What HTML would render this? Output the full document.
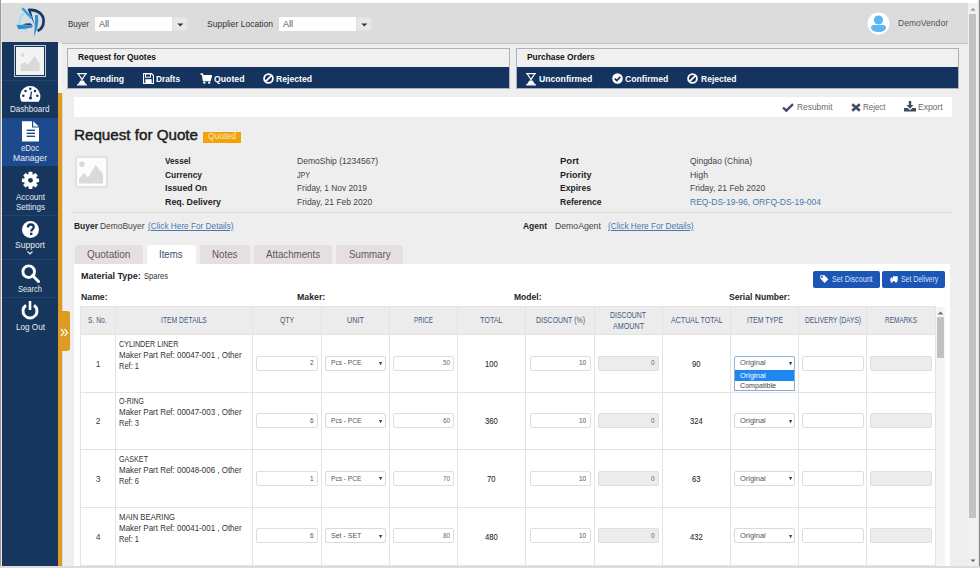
<!DOCTYPE html>
<html><head><meta charset="utf-8"><style>
html,body{margin:0;padding:0;}
body{width:980px;height:568px;overflow:hidden;position:relative;background:#eeeeee;font-family:"Liberation Sans",sans-serif;}
.t{position:absolute;white-space:nowrap;line-height:1.2;transform-origin:0 0;}
.b{position:absolute;box-sizing:border-box;}
</style></head><body>
<div class="b" style="left:0px;top:0px;width:980px;height:3px;background:#ffffff;"></div>
<div class="b" style="left:0px;top:0px;width:1px;height:568px;background:#9a9a9a;"></div>
<div class="b" style="left:1px;top:3px;width:1px;height:565px;background:#e8e8e8;"></div>
<div class="b" style="left:2px;top:3px;width:966px;height:40px;background:#dcdcdc;"></div>
<div class="b" style="left:2px;top:43px;width:966px;height:1px;background:#c4c2c2;"></div>
<div class="b" style="left:968px;top:3px;width:10px;height:563px;background:#f0f0f0;"></div>
<div class="b" style="left:969px;top:14px;width:7px;height:504px;background:#c2c2c2;"></div>
<svg class="b" style="left:969px;top:6px" width="8" height="6" viewBox="0 0 8 6"><path d="M1.5 4.5 L4 2 L6.5 4.5 Z" fill="#8a8a8a"/></svg>
<svg class="b" style="left:969px;top:558px" width="8" height="6" viewBox="0 0 8 6"><path d="M1.5 1.5 L4 4 L6.5 1.5 Z" fill="#606060"/></svg>
<div class="b" style="left:978px;top:0px;width:1px;height:568px;background:#e0e0e0;"></div>
<div class="b" style="left:979px;top:0px;width:1px;height:568px;background:#8a8a8a;"></div>
<div class="b" style="left:0px;top:566px;width:980px;height:2px;background:#d9dde2;"></div>
<svg class="b" style="left:14px;top:6px" width="34" height="34" viewBox="0 0 34 34">
<path d="M9.9 7.4 C6.5 10 5.4 14 5.9 17 C6.4 20.3 9 23 12.9 24.2" stroke="#a9ddf4" stroke-width="2.5" fill="none"/>
<path d="M14.5 3.9 C23.5 3 29.6 8.5 29.6 14.8 C29.6 20 26.8 23.6 23.6 25" stroke="#143a6b" stroke-width="2.7" fill="none"/>
<path d="M13.6 3 L16.4 3.6 L20.8 19.5 Z" fill="#143a6b"/>
<path d="M9 2.9 L17.4 11.9" stroke="#33a2df" stroke-width="2.5" stroke-linecap="round"/>
<path d="M23.7 8.5 C25.1 15 23.7 23 19.8 30.8 C20.8 23 21.3 15 21 9.6 Z" fill="#2a90d4"/>
<path d="M2.4 18.8 L18.6 19.6 L18.3 21.5 C13 22.6 8 23.1 4.4 23.3 Z" fill="#2a8fd0"/>
<path d="M8.4 18.6 C11 17.6 14 17.1 16.9 17.5 L18.6 19.6 Z" fill="#1a4373"/>
</svg>
<div class="t" style="left:67.50px;top:18.88px;font-size:9px;color:#333;transform:scaleX(0.8932);">Buyer</div>
<div class="b" style="left:95px;top:17px;width:93px;height:14px;background:#ffffff;"></div>
<div class="b" style="left:172px;top:17px;width:16px;height:14px;background:#e8e8e8;border:1px solid #e0e0e0;"></div>
<div class="t" style="left:99.00px;top:19.28px;font-size:9px;color:#555;">All</div>
<svg class="b" style="left:177px;top:23px" width="7" height="4" viewBox="0 0 7 4"><path d="M0.3 0.4 H6.3 L3.3 3.4 Z" fill="#333"/></svg>
<div class="t" style="left:207.00px;top:18.88px;font-size:9px;color:#333;transform:scaleX(0.9490);">Supplier Location</div>
<div class="b" style="left:279px;top:17px;width:93px;height:14px;background:#ffffff;"></div>
<div class="b" style="left:356px;top:17px;width:16px;height:14px;background:#e8e8e8;border:1px solid #e0e0e0;"></div>
<div class="t" style="left:283.00px;top:19.28px;font-size:9px;color:#555;">All</div>
<svg class="b" style="left:361px;top:23px" width="7" height="4" viewBox="0 0 7 4"><path d="M0.3 0.4 H6.3 L3.3 3.4 Z" fill="#333"/></svg>
<svg class="b" style="left:867px;top:12px" width="23" height="23" viewBox="0 0 23 23"><circle cx="11.5" cy="11.5" r="11" fill="#ffffff"/><circle cx="11.5" cy="8" r="4.6" fill="#5bb6f2"/><path d="M4 15.5 C4 13.5 6 13 8 13 L15 13 C17 13 19 13.5 19 15.5 C19 18 16 20 11.5 20 C7 20 4 18 4 15.5 Z" fill="#5bb6f2"/></svg>
<div class="t" style="left:898.00px;top:17.01px;font-size:9.5px;color:#555;transform:scaleX(0.9018);">DemoVendor</div>
<div class="b" style="left:2px;top:42px;width:56px;height:524px;background:#17365e;"></div>
<div class="b" style="left:58px;top:43px;width:4px;height:523px;background:#f2f2f2;"></div>
<div class="b" style="left:58px;top:93px;width:4px;height:473px;background:#dd9b22;"></div>
<div class="b" style="left:62px;top:93px;width:1px;height:473px;background:#dadada;"></div>
<div class="b" style="left:14px;top:45px;width:32px;height:32px;border:1px solid #c5cedb;"></div>
<div class="b" style="left:16px;top:47px;width:28px;height:28px;background:#f3f3f3;"></div>
<svg class="b" style="left:18px;top:50px" width="24" height="24" viewBox="0 0 24 24"><ellipse cx="4.7" cy="5" rx="1.6" ry="2" fill="#d9d9d9"/><path d="M2.6 21 L2.6 15 L6.4 12 L10 15 L16.4 6 L21.6 13 L21.6 21 Z" fill="#d9d9d9"/></svg>
<div class="b" style="left:2px;top:80px;width:56px;height:1px;background:#244271;"></div>
<svg class="b" style="left:20px;top:85px" width="22" height="18" viewBox="0 0 22 18"><path d="M1.6 16.8 A10.2 10.2 0 1 1 18.8 16.8 Z" fill="#ffffff"/><circle cx="5.5" cy="6" r="1.25" fill="#183562"/><circle cx="10.3" cy="3.8" r="1.25" fill="#183562"/><circle cx="15" cy="6" r="1.25" fill="#183562"/><circle cx="3.3" cy="10.8" r="1.25" fill="#183562"/><circle cx="17.3" cy="10.8" r="1.25" fill="#183562"/><path d="M11.5 6.5 L10.5 12.5" stroke="#183562" stroke-width="1.3"/><circle cx="10.5" cy="13" r="1.6" fill="#183562"/></svg>
<div class="t" style="left:10.25px;top:103.01px;font-size:9.5px;color:#e6ebf2;transform:scaleX(0.8500);">Dashboard</div>
<div class="b" style="left:2px;top:118px;width:56px;height:48px;background:#1d4a8c;"></div>
<svg class="b" style="left:22px;top:121px" width="17" height="21" viewBox="0 0 17 21"><path d="M0 0.3 H10 V6.6 H17 V20.5 H0 Z" fill="#ffffff"/><path d="M11.2 0.3 L16.8 5.6 H11.2 Z" fill="#ffffff"/><rect x="4.7" y="8.6" width="8.3" height="1.4" fill="#1d4a8c"/><rect x="4.7" y="11.6" width="8.3" height="1.4" fill="#1d4a8c"/><rect x="4.7" y="14.6" width="8.3" height="1.4" fill="#1d4a8c"/></svg>
<div class="t" style="left:21.00px;top:141.51px;font-size:9.5px;color:#e6ebf2;transform:scaleX(0.8117);">eDoc</div>
<div class="t" style="left:13.00px;top:152.01px;font-size:9.5px;color:#e6ebf2;transform:scaleX(0.9069);">Manager</div>
<svg class="b" style="left:21px;top:171px" width="19" height="19" viewBox="0 0 19 19"><g transform="translate(9.5,9.3)" fill="#ffffff"><circle r="6.6"/><rect x="-1.9" y="-8.6" width="3.8" height="4.5" rx="0.6" transform="rotate(0)"/><rect x="-1.9" y="-8.6" width="3.8" height="4.5" rx="0.6" transform="rotate(45)"/><rect x="-1.9" y="-8.6" width="3.8" height="4.5" rx="0.6" transform="rotate(90)"/><rect x="-1.9" y="-8.6" width="3.8" height="4.5" rx="0.6" transform="rotate(135)"/><rect x="-1.9" y="-8.6" width="3.8" height="4.5" rx="0.6" transform="rotate(180)"/><rect x="-1.9" y="-8.6" width="3.8" height="4.5" rx="0.6" transform="rotate(225)"/><rect x="-1.9" y="-8.6" width="3.8" height="4.5" rx="0.6" transform="rotate(270)"/><rect x="-1.9" y="-8.6" width="3.8" height="4.5" rx="0.6" transform="rotate(315)"/><circle r="2.4" fill="#17365e"/></g></svg>
<div class="t" style="left:15.50px;top:190.51px;font-size:9.5px;color:#e6ebf2;transform:scaleX(0.8449);">Account</div>
<div class="t" style="left:15.50px;top:201.01px;font-size:9.5px;color:#e6ebf2;transform:scaleX(0.8449);">Settings</div>
<div class="b" style="left:2px;top:215px;width:56px;height:1px;background:#244271;"></div>
<svg class="b" style="left:22.4px;top:220.7px" width="17" height="17" viewBox="0 0 17 17"><circle cx="8.5" cy="8.5" r="8.5" fill="#ffffff"/><path d="M5.9 6.6 C5.9 4.6 7.1 3.5 8.7 3.5 C10.5 3.5 11.7 4.6 11.7 6.1 C11.7 8.3 9.2 8.4 9.2 10.5" stroke="#17365e" stroke-width="2.3" fill="none"/><rect x="8" y="11.7" width="2.4" height="2.4" fill="#17365e"/></svg>
<div class="t" style="left:15.00px;top:239.01px;font-size:9.5px;color:#e6ebf2;transform:scaleX(0.9017);">Support</div>
<svg class="b" style="left:27px;top:251px" width="6" height="4" viewBox="0 0 6 4"><path d="M0.5 0.5 L3 3 L5.5 0.5" stroke="#e6ebf2" stroke-width="1.2" fill="none"/></svg>
<div class="b" style="left:2px;top:259px;width:56px;height:1px;background:#244271;"></div>
<svg class="b" style="left:21px;top:264px" width="19" height="19" viewBox="0 0 19 19"><circle cx="7.7" cy="7.7" r="5.8" stroke="#ffffff" stroke-width="2.9" fill="none"/><path d="M11.5 11.5 L17.5 17.5" stroke="#ffffff" stroke-width="3" stroke-linecap="round"/></svg>
<div class="t" style="left:18.00px;top:283.01px;font-size:9.5px;color:#e6ebf2;transform:scaleX(0.7974);">Search</div>
<div class="b" style="left:2px;top:297px;width:56px;height:1px;background:#244271;"></div>
<svg class="b" style="left:21px;top:300px" width="18" height="20" viewBox="0 0 18 20"><path d="M5 5.2 A7 7 0 1 0 13 5.2" stroke="#ffffff" stroke-width="2.9" fill="none"/><rect x="7.7" y="1" width="2.6" height="9" fill="#ffffff"/></svg>
<div class="t" style="left:15.50px;top:321.01px;font-size:9.5px;color:#e6ebf2;transform:scaleX(0.8580);">Log Out</div>
<div class="b" style="left:58px;top:311px;width:12px;height:40px;background:#dd9b22;border-radius:0 3px 3px 0;"></div>
<svg class="b" style="left:60px;top:328px" width="9" height="9" viewBox="0 0 9 9"><path d="M1 1 L4 4.5 L1 8 M4.5 1 L7.5 4.5 L4.5 8" stroke="#fff4dc" stroke-width="1.3" fill="none"/></svg>
<div class="b" style="left:67px;top:48px;width:443px;height:41px;border:1px solid #adb2ba;background:#f0f0f0;"></div>
<div class="b" style="left:68px;top:67px;width:441px;height:21px;background:#14335e;"></div>
<div class="t" style="left:78.00px;top:52.28px;font-size:9px;color:#111;font-weight:bold;transform:scaleX(0.9341);">Request for Quotes</div>
<div class="b" style="left:516px;top:48px;width:443px;height:41px;border:1px solid #adb2ba;background:#f0f0f0;"></div>
<div class="b" style="left:517px;top:67px;width:441px;height:21px;background:#14335e;"></div>
<div class="t" style="left:527.00px;top:52.28px;font-size:9px;color:#111;font-weight:bold;transform:scaleX(0.9320);">Purchase Orders</div>
<svg class="b" style="left:77px;top:72.5px" width="11" height="13" viewBox="0 0 11 13"><path d="M0 0 H10 V1.3 H0 Z M0 11.2 H10 V12.5 H0 Z" fill="#fff"/><path d="M1.4 1 L5 6.6 L8.6 1" stroke="#fff" stroke-width="1.2" fill="none"/><path d="M0.8 11.6 L3.4 7.4 L6.6 7.4 L9.2 11.6 Z" fill="#fff"/></svg>
<div class="t" style="left:90.40px;top:73.78px;font-size:9px;color:#fff;font-weight:bold;transform:scaleX(0.9578);">Pending</div>
<svg class="b" style="left:143px;top:73px" width="11" height="11" viewBox="0 0 11 11"><path d="M0.5 0.5 H8.5 L10.5 2.5 V10.5 H0.5 Z" fill="none" stroke="#fff" stroke-width="1.2"/><rect x="2.5" y="1" width="5" height="3.2" fill="none" stroke="#fff" stroke-width="1"/><rect x="2.3" y="6.2" width="6.4" height="3.8" fill="#fff"/></svg>
<div class="t" style="left:156.20px;top:73.78px;font-size:9px;color:#fff;font-weight:bold;transform:scaleX(0.9229);">Drafts</div>
<svg class="b" style="left:199.5px;top:73px" width="12" height="11" viewBox="0 0 12 11"><path d="M0.5 1 H2.5 L3.5 7.5 H10 L11.3 2.8 H3" stroke="#fff" stroke-width="1.6" fill="#fff" stroke-linejoin="round"/><circle cx="4.3" cy="9.6" r="1.2" fill="#fff"/><circle cx="9.2" cy="9.6" r="1.2" fill="#fff"/></svg>
<div class="t" style="left:213.70px;top:73.78px;font-size:9px;color:#fff;font-weight:bold;transform:scaleX(0.9685);">Quoted</div>
<svg class="b" style="left:262.5px;top:73px" width="11" height="11" viewBox="0 0 11 11"><circle cx="5.5" cy="5.5" r="4.4" stroke="#fff" stroke-width="1.8" fill="none"/><path d="M2.6 8.4 L8.4 2.6" stroke="#fff" stroke-width="1.8"/></svg>
<div class="t" style="left:276.00px;top:73.78px;font-size:9px;color:#fff;font-weight:bold;transform:scaleX(0.9597);">Rejected</div>
<svg class="b" style="left:526px;top:72.5px" width="11" height="13" viewBox="0 0 11 13"><path d="M0 0 H10 V1.3 H0 Z M0 11.2 H10 V12.5 H0 Z" fill="#fff"/><path d="M1.4 1 L5 6.6 L8.6 1" stroke="#fff" stroke-width="1.2" fill="none"/><path d="M0.8 11.6 L3.4 7.4 L6.6 7.4 L9.2 11.6 Z" fill="#fff"/></svg>
<div class="t" style="left:539.40px;top:73.78px;font-size:9px;color:#fff;font-weight:bold;transform:scaleX(0.9604);">Unconfirmed</div>
<svg class="b" style="left:611.5px;top:73px" width="11" height="11" viewBox="0 0 11 11"><circle cx="5.5" cy="5.5" r="5.3" fill="#fff"/><path d="M2.8 5.6 L4.8 7.6 L8.3 3.8" stroke="#14335e" stroke-width="1.7" fill="none"/></svg>
<div class="t" style="left:625.00px;top:73.78px;font-size:9px;color:#fff;font-weight:bold;transform:scaleX(0.9623);">Confirmed</div>
<svg class="b" style="left:687px;top:73px" width="11" height="11" viewBox="0 0 11 11"><circle cx="5.5" cy="5.5" r="4.4" stroke="#fff" stroke-width="1.8" fill="none"/><path d="M2.6 8.4 L8.4 2.6" stroke="#fff" stroke-width="1.8"/></svg>
<div class="t" style="left:700.70px;top:73.78px;font-size:9px;color:#fff;font-weight:bold;transform:scaleX(0.9463);">Rejected</div>
<div class="b" style="left:74px;top:97px;width:878px;height:20px;background:#ffffff;"></div>
<svg class="b" style="left:782px;top:103px" width="12" height="9" viewBox="0 0 12 9"><path d="M1 4.5 L4.3 7.7 L11 1.2" stroke="#3f4d5e" stroke-width="2.4" fill="none"/></svg>
<div class="t" style="left:797.00px;top:102.28px;font-size:9px;color:#6b6b6b;transform:scaleX(0.9339);">Resubmit</div>
<svg class="b" style="left:851px;top:103px" width="10" height="9" viewBox="0 0 10 9"><path d="M1.2 1.2 L8.8 7.8 M8.8 1.2 L1.2 7.8" stroke="#3f4d5e" stroke-width="2.6"/></svg>
<div class="t" style="left:863.40px;top:102.28px;font-size:9px;color:#6b6b6b;transform:scaleX(0.8820);">Reject</div>
<svg class="b" style="left:904px;top:101px" width="12" height="11" viewBox="0 0 12 11"><path d="M4.8 0 H7.2 V4 H9.5 L6 7.8 L2.5 4 H4.8 Z" fill="#3f4d5e"/><path d="M0 7 H3.6 L6 9.2 L8.4 7 H12 V10.5 H0 Z" fill="#3f4d5e"/></svg>
<div class="t" style="left:918.00px;top:102.28px;font-size:9px;color:#6b6b6b;transform:scaleX(0.9419);">Export</div>
<div class="t" style="left:74.00px;top:126.10px;font-size:15px;color:#1c1c1c;transform:scaleX(1.0117);-webkit-text-stroke:0.45px #1c1c1c;">Request for Quote</div>
<div class="b" style="left:203px;top:131.5px;width:38px;height:11.099999999999994px;background:#f4a20a;"></div>
<div class="t" style="left:208.00px;top:131.48px;font-size:9px;color:#fbe9c6;transform:scaleX(0.9485);">Quoted</div>
<div class="b" style="left:74.5px;top:155.5px;width:33.0px;height:32.5px;background:#fcfcfc;border:2px solid #e0e0e0;border-radius:3px;"></div>
<svg class="b" style="left:78px;top:159px" width="27" height="27" viewBox="0 0 27 27"><circle cx="3.9" cy="5.3" r="2.8" fill="#dadada"/><path d="M1 24.5 L1 20 L6 14 L10 18.5 L17.7 6 L25 15 L25 24.5 Z" fill="#dadada"/></svg>
<div class="t" style="left:165.40px;top:156.18px;font-size:9px;color:#1e1e1e;font-weight:bold;transform:scaleX(0.9134);">Vessel</div>
<div class="t" style="left:297.00px;top:156.18px;font-size:9px;color:#444;transform:scaleX(0.9469);">DemoShip (1234567)</div>
<div class="t" style="left:165.40px;top:169.78px;font-size:9px;color:#1e1e1e;font-weight:bold;transform:scaleX(0.9364);">Currency</div>
<div class="t" style="left:297.00px;top:169.78px;font-size:9px;color:#444;transform:scaleX(0.7876);">JPY</div>
<div class="t" style="left:165.40px;top:183.38px;font-size:9px;color:#1e1e1e;font-weight:bold;transform:scaleX(0.9654);">Issued On</div>
<div class="t" style="left:297.00px;top:183.38px;font-size:9px;color:#444;transform:scaleX(0.9288);">Friday, 1 Nov 2019</div>
<div class="t" style="left:165.40px;top:196.98px;font-size:9px;color:#1e1e1e;font-weight:bold;transform:scaleX(0.9820);">Req. Delivery</div>
<div class="t" style="left:297.00px;top:196.98px;font-size:9px;color:#444;transform:scaleX(0.9415);">Friday, 21 Feb 2020</div>
<div class="t" style="left:559.60px;top:156.18px;font-size:9px;color:#1e1e1e;font-weight:bold;transform:scaleX(1.0556);">Port</div>
<div class="t" style="left:689.70px;top:156.18px;font-size:9px;color:#444;transform:scaleX(0.9389);">Qingdao (China)</div>
<div class="t" style="left:559.60px;top:169.78px;font-size:9px;color:#1e1e1e;font-weight:bold;transform:scaleX(0.9997);">Priority</div>
<div class="t" style="left:689.70px;top:169.78px;font-size:9px;color:#444;transform:scaleX(0.9725);">High</div>
<div class="t" style="left:559.60px;top:183.38px;font-size:9px;color:#1e1e1e;font-weight:bold;transform:scaleX(0.9533);">Expires</div>
<div class="t" style="left:689.70px;top:183.38px;font-size:9px;color:#444;transform:scaleX(0.9415);">Friday, 21 Feb 2020</div>
<div class="t" style="left:559.60px;top:196.98px;font-size:9px;color:#1e1e1e;font-weight:bold;transform:scaleX(0.9536);">Reference</div>
<div class="t" style="left:689.70px;top:196.98px;font-size:9px;color:#4a78b0;transform:scaleX(0.9456);">REQ-DS-19-96, ORFQ-DS-19-004</div>
<div class="b" style="left:72px;top:212px;width:880px;height:1px;background:#dcdcdc;"></div>
<div class="t" style="left:74.00px;top:220.78px;font-size:9px;color:#1e1e1e;font-weight:bold;transform:scaleX(0.9408);">Buyer</div>
<div class="t" style="left:100.30px;top:220.78px;font-size:9px;color:#444;transform:scaleX(0.9365);">DemoBuyer</div>
<div class="t" style="left:147.50px;top:220.78px;font-size:9px;color:#4a78b0;transform:scaleX(0.9144);text-decoration:underline;">(Click Here For Details)</div>
<div class="t" style="left:523.00px;top:220.78px;font-size:9px;color:#1e1e1e;font-weight:bold;transform:scaleX(0.9413);">Agent</div>
<div class="t" style="left:554.70px;top:220.78px;font-size:9px;color:#444;transform:scaleX(0.9637);">DemoAgent</div>
<div class="t" style="left:608.00px;top:220.78px;font-size:9px;color:#4a78b0;transform:scaleX(0.9144);text-decoration:underline;">(Click Here For Details)</div>
<div class="b" style="left:74.5px;top:245px;width:68.0px;height:19px;background:#e6dfdf;border-radius:3px 3px 0 0;"></div>
<div class="t" style="left:86.90px;top:247.66px;font-size:10.5px;color:#5a5a5a;transform:scaleX(0.9510);">Quotation</div>
<div class="b" style="left:146.5px;top:245px;width:49.0px;height:19px;background:#ffffff;border-radius:3px 3px 0 0;"></div>
<div class="t" style="left:158.80px;top:247.66px;font-size:10.5px;color:#3d4d6e;transform:scaleX(0.9194);">Items</div>
<div class="b" style="left:200px;top:245px;width:50px;height:19px;background:#e6dfdf;border-radius:3px 3px 0 0;"></div>
<div class="t" style="left:212.00px;top:247.66px;font-size:10.5px;color:#5a5a5a;transform:scaleX(0.9261);">Notes</div>
<div class="b" style="left:254px;top:245px;width:78px;height:19px;background:#e6dfdf;border-radius:3px 3px 0 0;"></div>
<div class="t" style="left:265.80px;top:247.66px;font-size:10.5px;color:#5a5a5a;transform:scaleX(0.9253);">Attachments</div>
<div class="b" style="left:335.5px;top:245px;width:67.0px;height:19px;background:#e6dfdf;border-radius:3px 3px 0 0;"></div>
<div class="t" style="left:348.50px;top:247.66px;font-size:10.5px;color:#5a5a5a;transform:scaleX(0.9261);">Summary</div>
<div class="b" style="left:74px;top:264px;width:876px;height:302px;background:#ffffff;"></div>
<div class="t" style="left:80.60px;top:270.88px;font-size:9px;color:#1e1e1e;font-weight:bold;transform:scaleX(0.9976);">Material Type:</div>
<div class="t" style="left:143.50px;top:270.88px;font-size:9px;color:#333;transform:scaleX(0.8417);">Spares</div>
<div class="b" style="left:813px;top:270.5px;width:67px;height:17.5px;background:#1b55b5;border-radius:2px;"></div>
<svg class="b" style="left:819.5px;top:275.3px" width="9" height="8" viewBox="0 0 9 8"><path d="M0.3 0.3 H4.4 L8.4 4.2 L4.6 7.9 L0.3 3.6 Z" fill="#fff"/><circle cx="2" cy="2" r="0.9" fill="#1b55b5"/></svg>
<div class="t" style="left:831.80px;top:274.25px;font-size:8.5px;color:#d8e3f5;transform:scaleX(0.8425);">Set Discount</div>
<div class="b" style="left:882px;top:270.5px;width:63px;height:17.5px;background:#1b55b5;border-radius:2px;"></div>
<svg class="b" style="left:889.5px;top:276px" width="8" height="7" viewBox="0 0 8 7"><path d="M3 0.3 H7.7 V5.2 H3 Z M0.3 2.6 L1.3 1.4 H2.8 V5.2 H0.3 Z" fill="#fff"/><circle cx="1.8" cy="5.6" r="1.1" fill="#fff"/><circle cx="6" cy="5.6" r="1.1" fill="#fff"/></svg>
<div class="t" style="left:900.70px;top:274.25px;font-size:8.5px;color:#d8e3f5;transform:scaleX(0.8119);">Set Delivery</div>
<div class="t" style="left:80.60px;top:291.68px;font-size:9px;color:#1e1e1e;font-weight:bold;transform:scaleX(0.9670);">Name:</div>
<div class="t" style="left:297.30px;top:291.68px;font-size:9px;color:#1e1e1e;font-weight:bold;transform:scaleX(0.9720);">Maker:</div>
<div class="t" style="left:513.80px;top:291.68px;font-size:9px;color:#1e1e1e;font-weight:bold;transform:scaleX(0.9485);">Model:</div>
<div class="t" style="left:729.40px;top:291.68px;font-size:9px;color:#1e1e1e;font-weight:bold;transform:scaleX(0.9529);">Serial Number:</div>
<div class="b" style="left:80px;top:306.5px;width:855px;height:28.0px;background:#ececec;"></div>
<div class="b" style="left:80px;top:306px;width:855px;height:1px;background:#e3e3e3;"></div>
<div class="b" style="left:80px;top:334px;width:855px;height:1px;background:#e3e3e3;"></div>
<div class="b" style="left:80px;top:392px;width:855px;height:1px;background:#e3e3e3;"></div>
<div class="b" style="left:80px;top:449px;width:855px;height:1px;background:#e3e3e3;"></div>
<div class="b" style="left:80px;top:507px;width:855px;height:1px;background:#e3e3e3;"></div>
<div class="b" style="left:80px;top:565px;width:855px;height:1px;background:#e3e3e3;"></div>
<div class="b" style="left:80px;top:306px;width:1px;height:260px;background:#e3e3e3;"></div>
<div class="b" style="left:115px;top:306px;width:1px;height:260px;background:#e3e3e3;"></div>
<div class="b" style="left:252px;top:306px;width:1px;height:260px;background:#e3e3e3;"></div>
<div class="b" style="left:321px;top:306px;width:1px;height:260px;background:#e3e3e3;"></div>
<div class="b" style="left:389px;top:306px;width:1px;height:260px;background:#e3e3e3;"></div>
<div class="b" style="left:457px;top:306px;width:1px;height:260px;background:#e3e3e3;"></div>
<div class="b" style="left:525px;top:306px;width:1px;height:260px;background:#e3e3e3;"></div>
<div class="b" style="left:594px;top:306px;width:1px;height:260px;background:#e3e3e3;"></div>
<div class="b" style="left:662px;top:306px;width:1px;height:260px;background:#e3e3e3;"></div>
<div class="b" style="left:730px;top:306px;width:1px;height:260px;background:#e3e3e3;"></div>
<div class="b" style="left:798px;top:306px;width:1px;height:260px;background:#e3e3e3;"></div>
<div class="b" style="left:866px;top:306px;width:1px;height:260px;background:#e3e3e3;"></div>
<div class="b" style="left:935px;top:306px;width:1px;height:260px;background:#e3e3e3;"></div>
<div class="t" style="left:88.45px;top:315.45px;font-size:8.5px;color:#3f5a80;transform:scaleX(0.7875);">S. No.</div>
<div class="t" style="left:161.05px;top:315.45px;font-size:8.5px;color:#3f5a80;transform:scaleX(0.7988);">ITEM DETAILS</div>
<div class="t" style="left:280.00px;top:315.45px;font-size:8.5px;color:#3f5a80;transform:scaleX(0.8012);">QTY</div>
<div class="t" style="left:347.00px;top:315.45px;font-size:8.5px;color:#3f5a80;transform:scaleX(0.8573);">UNIT</div>
<div class="t" style="left:414.00px;top:315.45px;font-size:8.5px;color:#3f5a80;transform:scaleX(0.7314);">PRICE</div>
<div class="t" style="left:480.35px;top:315.45px;font-size:8.5px;color:#3f5a80;transform:scaleX(0.8494);">TOTAL</div>
<div class="t" style="left:535.60px;top:315.45px;font-size:8.5px;color:#3f5a80;transform:scaleX(0.8192);">DISCOUNT (%)</div>
<div class="t" style="left:610.40px;top:309.75px;font-size:8.5px;color:#3f5a80;transform:scaleX(0.8110);">DISCOUNT</div>
<div class="t" style="left:612.90px;top:320.75px;font-size:8.5px;color:#3f5a80;transform:scaleX(0.8417);">AMOUNT</div>
<div class="t" style="left:670.80px;top:315.45px;font-size:8.5px;color:#3f5a80;transform:scaleX(0.8318);">ACTUAL TOTAL</div>
<div class="t" style="left:746.80px;top:315.45px;font-size:8.5px;color:#3f5a80;transform:scaleX(0.8052);">ITEM TYPE</div>
<div class="t" style="left:804.65px;top:315.45px;font-size:8.5px;color:#3f5a80;transform:scaleX(0.7748);">DELIVERY (DAYS)</div>
<div class="t" style="left:884.75px;top:315.45px;font-size:8.5px;color:#3f5a80;transform:scaleX(0.7612);">REMARKS</div>
<div class="b" style="left:935.5px;top:307px;width:9.0px;height:259px;background:#f5f5f5;"></div>
<div class="b" style="left:937px;top:317px;width:6.7000000000000455px;height:41px;background:#c1c1c1;"></div>
<svg class="b" style="left:937px;top:311px" width="7" height="4" viewBox="0 0 7 4"><path d="M0.5 3.5 L3.5 0.5 L6.5 3.5 Z" fill="#707070"/></svg>
<div class="t" style="left:95.64px;top:358.75px;font-size:8.5px;color:#444;">1</div>
<div class="t" style="left:119.40px;top:338.85px;font-size:8.5px;color:#333;transform:scaleX(0.8426);">CYLINDER LINER</div>
<div class="t" style="left:119.40px;top:349.85px;font-size:8.5px;color:#333;transform:scaleX(0.9369);">Maker Part Ref: 00047-001 , Other</div>
<div class="t" style="left:119.40px;top:360.95px;font-size:8.5px;color:#333;transform:scaleX(0.8820);">Ref: 1</div>
<div class="b" style="left:256.3px;top:355.5px;width:61.69999999999999px;height:15.0px;background:#fff;border:1px solid #dedede;border-radius:2px;"></div>
<div class="t" style="left:309.94px;top:358.43px;font-size:8px;color:#505050;transform:scaleX(0.8000);">2</div>
<div class="b" style="left:325.3px;top:355.5px;width:60.69999999999999px;height:15.0px;background:#fff;border:1px solid #d9d9d9;border-radius:2px;"></div>
<div class="t" style="left:331.30px;top:358.43px;font-size:8px;color:#555;transform:scaleX(0.8240);">Pcs - PCE</div>
<svg class="b" style="left:378px;top:361.0px" width="5" height="5" viewBox="0 0 5 5"><path d="M0.9 1 H4.3 L2.6 4.2 Z" fill="#444"/></svg>
<div class="b" style="left:393.4px;top:355.5px;width:61.10000000000002px;height:15.0px;background:#fff;border:1px solid #dedede;border-radius:2px;"></div>
<div class="t" style="left:442.88px;top:358.43px;font-size:8px;color:#6a6a6a;transform:scaleX(0.8000);">50</div>
<div class="t" style="left:485.32px;top:358.75px;font-size:8.5px;color:#222;transform:scaleX(0.9000);-webkit-text-stroke:0.05px #111;">100</div>
<div class="b" style="left:529.6px;top:355.5px;width:61.39999999999998px;height:15.0px;background:#fff;border:1px solid #dedede;border-radius:2px;"></div>
<div class="t" style="left:579.38px;top:358.43px;font-size:8px;color:#505050;transform:scaleX(0.8000);">10</div>
<div class="b" style="left:597.7px;top:355.5px;width:61.299999999999955px;height:15.0px;background:#ececec;border:1px solid #dedede;border-radius:2px;"></div>
<div class="t" style="left:650.94px;top:358.43px;font-size:8px;color:#666;transform:scaleX(0.8000);">0</div>
<div class="t" style="left:692.15px;top:358.75px;font-size:8.5px;color:#222;transform:scaleX(0.9000);-webkit-text-stroke:0.05px #111;">90</div>
<div class="b" style="left:734.2px;top:355.5px;width:61.299999999999955px;height:15.0px;background:#fff;border:1px solid #8fb4e0;border-radius:2px;"></div>
<div class="t" style="left:740.20px;top:358.43px;font-size:8px;color:#555;transform:scaleX(0.9323);">Original</div>
<svg class="b" style="left:787.5px;top:361.0px" width="5" height="5" viewBox="0 0 5 5"><path d="M0.9 1 H4.3 L2.6 4.2 Z" fill="#444"/></svg>
<div class="b" style="left:802px;top:355.5px;width:61.5px;height:15.0px;background:#fff;border:1px solid #dedede;border-radius:2px;"></div>
<div class="b" style="left:870px;top:355.5px;width:61.60000000000002px;height:15.0px;background:#ececec;border:1px solid #dedede;border-radius:2px;"></div>
<div class="t" style="left:95.64px;top:416.25px;font-size:8.5px;color:#444;">2</div>
<div class="t" style="left:119.40px;top:396.35px;font-size:8.5px;color:#333;transform:scaleX(0.8146);">O-RING</div>
<div class="t" style="left:119.40px;top:407.35px;font-size:8.5px;color:#333;transform:scaleX(0.9369);">Maker Part Ref: 00047-003 , Other</div>
<div class="t" style="left:119.40px;top:418.45px;font-size:8.5px;color:#333;transform:scaleX(0.8820);">Ref: 3</div>
<div class="b" style="left:256.3px;top:413.0px;width:61.69999999999999px;height:15.0px;background:#fff;border:1px solid #dedede;border-radius:2px;"></div>
<div class="t" style="left:309.94px;top:415.93px;font-size:8px;color:#505050;transform:scaleX(0.8000);">6</div>
<div class="b" style="left:325.3px;top:413.0px;width:60.69999999999999px;height:15.0px;background:#fff;border:1px solid #d9d9d9;border-radius:2px;"></div>
<div class="t" style="left:331.30px;top:415.93px;font-size:8px;color:#555;transform:scaleX(0.8240);">Pcs - PCE</div>
<svg class="b" style="left:378px;top:418.5px" width="5" height="5" viewBox="0 0 5 5"><path d="M0.9 1 H4.3 L2.6 4.2 Z" fill="#444"/></svg>
<div class="b" style="left:393.4px;top:413.0px;width:61.10000000000002px;height:15.0px;background:#fff;border:1px solid #dedede;border-radius:2px;"></div>
<div class="t" style="left:442.88px;top:415.93px;font-size:8px;color:#6a6a6a;transform:scaleX(0.8000);">60</div>
<div class="t" style="left:485.32px;top:416.25px;font-size:8.5px;color:#222;transform:scaleX(0.9000);-webkit-text-stroke:0.05px #111;">360</div>
<div class="b" style="left:529.6px;top:413.0px;width:61.39999999999998px;height:15.0px;background:#fff;border:1px solid #dedede;border-radius:2px;"></div>
<div class="t" style="left:579.38px;top:415.93px;font-size:8px;color:#505050;transform:scaleX(0.8000);">10</div>
<div class="b" style="left:597.7px;top:413.0px;width:61.299999999999955px;height:15.0px;background:#ececec;border:1px solid #dedede;border-radius:2px;"></div>
<div class="t" style="left:650.94px;top:415.93px;font-size:8px;color:#666;transform:scaleX(0.8000);">0</div>
<div class="t" style="left:690.02px;top:416.25px;font-size:8.5px;color:#222;transform:scaleX(0.9000);-webkit-text-stroke:0.05px #111;">324</div>
<div class="b" style="left:734.2px;top:413.0px;width:61.299999999999955px;height:15.0px;background:#fff;border:1px solid #d9d9d9;border-radius:2px;"></div>
<div class="t" style="left:740.20px;top:415.93px;font-size:8px;color:#555;transform:scaleX(0.9323);">Original</div>
<svg class="b" style="left:787.5px;top:418.5px" width="5" height="5" viewBox="0 0 5 5"><path d="M0.9 1 H4.3 L2.6 4.2 Z" fill="#444"/></svg>
<div class="b" style="left:802px;top:413.0px;width:61.5px;height:15.0px;background:#fff;border:1px solid #dedede;border-radius:2px;"></div>
<div class="b" style="left:870px;top:413.0px;width:61.60000000000002px;height:15.0px;background:#ececec;border:1px solid #dedede;border-radius:2px;"></div>
<div class="t" style="left:95.64px;top:473.95px;font-size:8.5px;color:#444;">3</div>
<div class="t" style="left:119.40px;top:454.05px;font-size:8.5px;color:#333;transform:scaleX(0.8410);">GASKET</div>
<div class="t" style="left:119.40px;top:465.05px;font-size:8.5px;color:#333;transform:scaleX(0.9369);">Maker Part Ref: 00048-006 , Other</div>
<div class="t" style="left:119.40px;top:476.15px;font-size:8.5px;color:#333;transform:scaleX(0.8820);">Ref: 6</div>
<div class="b" style="left:256.3px;top:470.7px;width:61.69999999999999px;height:15.0px;background:#fff;border:1px solid #dedede;border-radius:2px;"></div>
<div class="t" style="left:309.94px;top:473.63px;font-size:8px;color:#505050;transform:scaleX(0.8000);">1</div>
<div class="b" style="left:325.3px;top:470.7px;width:60.69999999999999px;height:15.0px;background:#fff;border:1px solid #d9d9d9;border-radius:2px;"></div>
<div class="t" style="left:331.30px;top:473.63px;font-size:8px;color:#555;transform:scaleX(0.8240);">Pcs - PCE</div>
<svg class="b" style="left:378px;top:476.2px" width="5" height="5" viewBox="0 0 5 5"><path d="M0.9 1 H4.3 L2.6 4.2 Z" fill="#444"/></svg>
<div class="b" style="left:393.4px;top:470.7px;width:61.10000000000002px;height:15.0px;background:#fff;border:1px solid #dedede;border-radius:2px;"></div>
<div class="t" style="left:442.88px;top:473.63px;font-size:8px;color:#6a6a6a;transform:scaleX(0.8000);">70</div>
<div class="t" style="left:487.45px;top:473.95px;font-size:8.5px;color:#222;transform:scaleX(0.9000);-webkit-text-stroke:0.05px #111;">70</div>
<div class="b" style="left:529.6px;top:470.7px;width:61.39999999999998px;height:15.0px;background:#fff;border:1px solid #dedede;border-radius:2px;"></div>
<div class="t" style="left:579.38px;top:473.63px;font-size:8px;color:#505050;transform:scaleX(0.8000);">10</div>
<div class="b" style="left:597.7px;top:470.7px;width:61.299999999999955px;height:15.0px;background:#ececec;border:1px solid #dedede;border-radius:2px;"></div>
<div class="t" style="left:650.94px;top:473.63px;font-size:8px;color:#666;transform:scaleX(0.8000);">0</div>
<div class="t" style="left:692.15px;top:473.95px;font-size:8.5px;color:#222;transform:scaleX(0.9000);-webkit-text-stroke:0.05px #111;">63</div>
<div class="b" style="left:734.2px;top:470.7px;width:61.299999999999955px;height:15.0px;background:#fff;border:1px solid #d9d9d9;border-radius:2px;"></div>
<div class="t" style="left:740.20px;top:473.63px;font-size:8px;color:#555;transform:scaleX(0.9323);">Original</div>
<svg class="b" style="left:787.5px;top:476.2px" width="5" height="5" viewBox="0 0 5 5"><path d="M0.9 1 H4.3 L2.6 4.2 Z" fill="#444"/></svg>
<div class="b" style="left:802px;top:470.7px;width:61.5px;height:15.0px;background:#fff;border:1px solid #dedede;border-radius:2px;"></div>
<div class="b" style="left:870px;top:470.7px;width:61.60000000000002px;height:15.0px;background:#ececec;border:1px solid #dedede;border-radius:2px;"></div>
<div class="t" style="left:95.64px;top:531.65px;font-size:8.5px;color:#444;">4</div>
<div class="t" style="left:119.40px;top:511.75px;font-size:8.5px;color:#333;transform:scaleX(0.9051);">MAIN BEARING</div>
<div class="t" style="left:119.40px;top:522.75px;font-size:8.5px;color:#333;transform:scaleX(0.9369);">Maker Part Ref: 00041-001 , Other</div>
<div class="t" style="left:119.40px;top:533.85px;font-size:8.5px;color:#333;transform:scaleX(0.8820);">Ref: 1</div>
<div class="b" style="left:256.3px;top:528.4px;width:61.69999999999999px;height:15.0px;background:#fff;border:1px solid #dedede;border-radius:2px;"></div>
<div class="t" style="left:309.94px;top:531.33px;font-size:8px;color:#505050;transform:scaleX(0.8000);">6</div>
<div class="b" style="left:325.3px;top:528.4px;width:60.69999999999999px;height:15.0px;background:#fff;border:1px solid #d9d9d9;border-radius:2px;"></div>
<div class="t" style="left:331.30px;top:531.33px;font-size:8px;color:#555;transform:scaleX(0.8767);">Set - SET</div>
<svg class="b" style="left:378px;top:533.9px" width="5" height="5" viewBox="0 0 5 5"><path d="M0.9 1 H4.3 L2.6 4.2 Z" fill="#444"/></svg>
<div class="b" style="left:393.4px;top:528.4px;width:61.10000000000002px;height:15.0px;background:#fff;border:1px solid #dedede;border-radius:2px;"></div>
<div class="t" style="left:442.88px;top:531.33px;font-size:8px;color:#6a6a6a;transform:scaleX(0.8000);">80</div>
<div class="t" style="left:485.32px;top:531.65px;font-size:8.5px;color:#222;transform:scaleX(0.9000);-webkit-text-stroke:0.05px #111;">480</div>
<div class="b" style="left:529.6px;top:528.4px;width:61.39999999999998px;height:15.0px;background:#fff;border:1px solid #dedede;border-radius:2px;"></div>
<div class="t" style="left:579.38px;top:531.33px;font-size:8px;color:#505050;transform:scaleX(0.8000);">10</div>
<div class="b" style="left:597.7px;top:528.4px;width:61.299999999999955px;height:15.0px;background:#ececec;border:1px solid #dedede;border-radius:2px;"></div>
<div class="t" style="left:650.94px;top:531.33px;font-size:8px;color:#666;transform:scaleX(0.8000);">0</div>
<div class="t" style="left:690.02px;top:531.65px;font-size:8.5px;color:#222;transform:scaleX(0.9000);-webkit-text-stroke:0.05px #111;">432</div>
<div class="b" style="left:734.2px;top:528.4px;width:61.299999999999955px;height:15.0px;background:#fff;border:1px solid #d9d9d9;border-radius:2px;"></div>
<div class="t" style="left:740.20px;top:531.33px;font-size:8px;color:#555;transform:scaleX(0.9323);">Original</div>
<svg class="b" style="left:787.5px;top:533.9px" width="5" height="5" viewBox="0 0 5 5"><path d="M0.9 1 H4.3 L2.6 4.2 Z" fill="#444"/></svg>
<div class="b" style="left:802px;top:528.4px;width:61.5px;height:15.0px;background:#fff;border:1px solid #dedede;border-radius:2px;"></div>
<div class="b" style="left:870px;top:528.4px;width:61.60000000000002px;height:15.0px;background:#ececec;border:1px solid #dedede;border-radius:2px;"></div>
<div class="b" style="left:734.2px;top:370.2px;width:61.299999999999955px;height:21.30000000000001px;background:#fff;border:1px solid #8fa9d6;"></div>
<div class="b" style="left:735.2px;top:370.2px;width:59.299999999999955px;height:10.800000000000011px;background:#1e88f0;"></div>
<div class="t" style="left:740.30px;top:371.23px;font-size:8px;color:#ffffff;transform:scaleX(0.9323);">Original</div>
<div class="t" style="left:740.30px;top:381.43px;font-size:8px;color:#444;transform:scaleX(0.8897);">Compatible</div>
</body></html>
